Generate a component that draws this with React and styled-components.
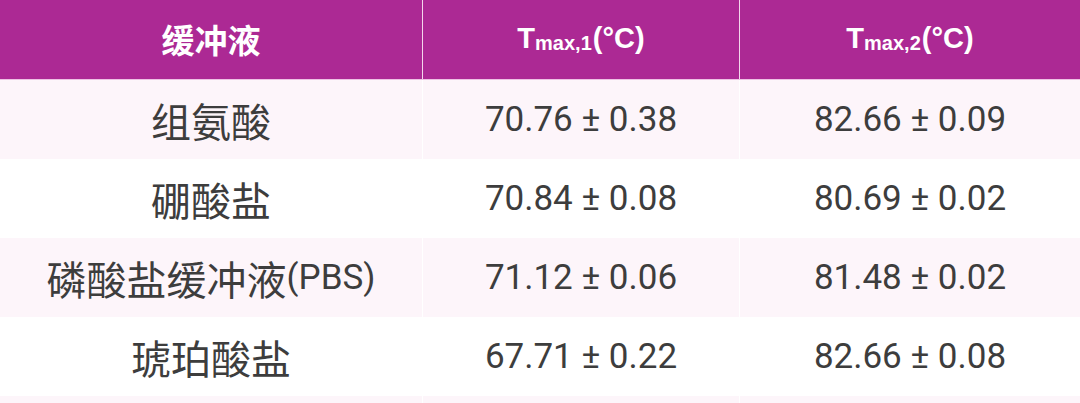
import React from 'react';
import styled, { createGlobalStyle } from 'styled-components';

const GlobalStyle = createGlobalStyle`
  html, body {
    margin: 0;
    padding: 0;
    background: #ffffff;
  }
  body {
    font-family: Roboto, "Liberation Sans", "Noto Sans CJK SC", sans-serif;
  }
`;

const rows = [
  { name: '组氨酸', t1: '70.76 ± 0.38', t2: '82.66 ± 0.09' },
  { name: '硼酸盐', t1: '70.84 ± 0.08', t2: '80.69 ± 0.02' },
  { name: '磷酸盐缓冲液', suffix: '(PBS)', t1: '71.12 ± 0.06', t2: '81.48 ± 0.02' },
  { name: '琥珀酸盐', t1: '67.71 ± 0.22', t2: '82.66 ± 0.08' },
];

const App = () => {
  return (
    <>
      <GlobalStyle />
      <Table>
        <HeaderRow>
          <HeadCell>缓冲液</HeadCell>
          <HeadCell>
            <Latin>T</Latin>
            <Sub>max,1</Sub>
            <Latin>(°C)</Latin>
          </HeadCell>
          <HeadCell>
            <Latin>T</Latin>
            <Sub>max,2</Sub>
            <Latin>(°C)</Latin>
          </HeadCell>
        </HeaderRow>
        {rows.map((row, i) => (
          <Row key={row.name} $striped={i % 2 === 0}>
            <Cell>
              <Name>{row.name}</Name>
              {row.suffix}
            </Cell>
            <Cell>{row.t1}</Cell>
            <Cell>{row.t2}</Cell>
          </Row>
        ))}
        <Row $striped $short>
          <Cell />
          <Cell />
          <Cell />
        </Row>
      </Table>
    </>
  );
};

const Table = styled.div`
  width: 1080px;
  display: flex;
  flex-direction: column;
`;

const HeaderRow = styled.div`
  display: grid;
  grid-template-columns: 422px 317px 1fr;
  height: 79px;
  background: #ac2994;
  border-bottom: 1px solid #eec2e4;
`;

const HeadCell = styled.div`
  display: flex;
  align-items: center;
  justify-content: center;
  color: #ffffff;
  font-family: "Noto Sans CJK SC", sans-serif;
  font-weight: 700;
  font-size: 33px;
  padding-bottom: 2px;

  & + & {
    border-left: 1px solid #f3d6ec;
  }
`;

const Latin = styled.span`
  font-family: "Liberation Sans", Arial, sans-serif;
  font-weight: 700;
  font-size: 29px;
`;

const Sub = styled.span`
  font-family: "Liberation Sans", Arial, sans-serif;
  font-weight: 700;
  font-size: 20px;
  margin-top: 10px;
  margin-right: 1px;
`;

const Row = styled.div`
  display: grid;
  grid-template-columns: 422px 317px 1fr;
  height: ${({ $short }) => ($short ? '8px' : '79px')};
  background: ${({ $striped }) => ($striped ? '#fdf5fa' : '#ffffff')};
`;

const Cell = styled.div`
  display: flex;
  align-items: center;
  justify-content: center;
  color: #3d3d3d;
  font-family: Roboto, "Noto Sans CJK SC", sans-serif;
  font-size: 35px;

  & + & {
    border-left: 1px solid #ffffff;
  }
`;

const Name = styled.span`
  font-family: "Noto Sans CJK SC", sans-serif;
  font-size: 40px;
`;

export default App;
